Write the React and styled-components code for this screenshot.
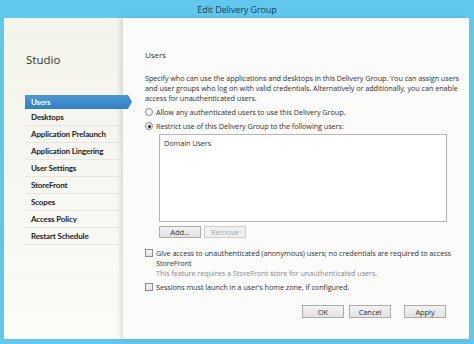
import React from "react";
import styled, { createGlobalStyle } from "styled-components";

const Global = createGlobalStyle`
  html, body { margin: 0; padding: 0; background: #5fc8ec; }
  * { box-sizing: border-box; }
`;

const Window = styled.div`
  width: 474px;
  height: 344px;
  background: #5fc8ec;
  display: flex;
  flex-direction: column;
  font-family: "Open Sans", "Noto Sans", sans-serif;
  color: #333;
  overflow: hidden;
`;

const TitleBar = styled.div`
  height: 18px;
  display: flex;
  align-items: center;
  justify-content: center;
  font-size: 9px;
  letter-spacing: -0.1px;
  color: #1b3b52;
  padding-top: 1px;
`;

const Body = styled.div`
  flex: 1;
  min-height: 0;
  margin: 0 5px 5px 4px;
  display: flex;
  background: linear-gradient(180deg, #f4f4ec 0%, #f8f8f3 60%, #fbfbf8 100%);
`;

const Sidebar = styled.div`
  width: 119px;
  flex: none;
  padding-top: 33px;
  position: relative;
  z-index: 2;
`;

const Brand = styled.div`
  font-size: 11.5px;
  color: #333;
  padding-left: 22px;
  line-height: 18px;
  margin-bottom: 26px;
`;

const NavList = styled.div`
  display: flex;
  flex-direction: column;
  margin-left: 21px;
  width: 98px;
`;

const NavItem = styled.div`
  position: relative;
  height: ${(p) => (p.$active ? "14px" : "17px")};
  line-height: ${(p) => (p.$active ? "14px" : "17px")};
  padding-left: 6px;
  font-family: "Lato", "Open Sans", sans-serif;
  font-size: 8px;
  font-weight: 700;
  letter-spacing: -0.15px;
  white-space: nowrap;
  color: ${(p) => (p.$active ? "#fff" : "#222")};
  background: ${(p) =>
    p.$active ? "linear-gradient(180deg, #4b9ad6 0%, #2f7fc4 100%)" : "transparent"};
  border-bottom: ${(p) => (p.$active ? "none" : "1px solid #e6e6e0")};
  margin-right: ${(p) => (p.$active ? "-5px" : "0")};
  &::after {
    content: "";
    display: ${(p) => (p.$active ? "block" : "none")};
    position: absolute;
    right: -4px;
    top: 0;
    border-top: 7px solid transparent;
    border-bottom: 7px solid transparent;
    border-left: 4px solid #3c8bcc;
  }
`;

const Panel = styled.div`
  flex: 1;
  min-width: 0;
  overflow: hidden;
  background: #fbfbf9;
  box-shadow: -3px 0 4px rgba(0, 0, 0, 0.11);
  padding: 32px 0 0 22px;
  display: flex;
  flex-direction: column;
  font-size: 7.3px;
  letter-spacing: -0.08px;
  line-height: 10px;
`;

const Heading = styled.div`
  font-size: 8px;
  line-height: 10px;
  color: #333;
  margin-bottom: 13px;
`;

const Para = styled.div`
  white-space: nowrap;
  margin-bottom: 2px;
`;

const OptionRow = styled.label`
  display: flex;
  align-items: center;
  gap: 3px;
  height: 14px;
  white-space: nowrap;
`;

const Radio = styled.span`
  width: 8px;
  height: 8px;
  border-radius: 50%;
  border: 1px solid #8d8d8d;
  background: radial-gradient(circle, #fff 0%, #e6e6e6 100%);
  display: flex;
  align-items: center;
  justify-content: center;
  flex: none;
  &::before {
    content: "";
    width: 3px;
    height: 3px;
    border-radius: 50%;
    background: ${(p) => (p.$checked ? "#222" : "transparent")};
  }
`;

const Check = styled.span`
  width: 8px;
  height: 8px;
  border: 1px solid #8d8d8d;
  background: linear-gradient(180deg, #f4f4f4, #e2e2e2);
  flex: none;
  margin-top: ${(p) => p.$top || "0"};
`;

const ListBox = styled.div`
  margin: 1px 0 0 14px;
  width: 288px;
  height: 88px;
  border: 1px solid #b5b5b5;
  background: #fff;
  padding: 3px 4px;
  line-height: 10px;
`;

const ButtonRow = styled.div`
  display: flex;
  gap: ${(p) => p.$gap || "3px"};
  margin: ${(p) => p.$margin || "0"};
`;

const Button = styled.div`
  width: ${(p) => p.$w || "42px"};
  height: ${(p) => p.$h || "12px"};
  margin-left: ${(p) => p.$ml || "0"};
  border: 1px solid ${(p) => (p.$disabled ? "#cfcfcf" : "#acacac")};
  background: ${(p) =>
    p.$disabled ? "#efefef" : "linear-gradient(180deg, #f2f2f2 0%, #e3e3e3 100%)"};
  color: ${(p) => (p.$disabled ? "#a8a8a8" : "#333")};
  display: flex;
  align-items: center;
  justify-content: center;
  font-size: 7.5px;
`;

const CheckRow = styled.div`
  display: flex;
  gap: 3px;
  align-items: flex-start;
  margin: ${(p) => p.$margin || "0"};
`;

const CheckText = styled.div`
  white-space: nowrap;
  line-height: 10px;
`;

const Note = styled.div`
  color: #8a8a8a;
`;

const navItems = [
  "Desktops",
  "Application Prelaunch",
  "Application Lingering",
  "User Settings",
  "StoreFront",
  "Scopes",
  "Access Policy",
  "Restart Schedule",
];

export default function App() {
  return (
    <Window>
      <Global />
      <TitleBar>Edit Delivery Group</TitleBar>
      <Body>
        <Sidebar>
          <Brand>Studio</Brand>
          <NavList>
            <NavItem $active>Users</NavItem>
            {navItems.map((n) => (
              <NavItem key={n}>{n}</NavItem>
            ))}
          </NavList>
        </Sidebar>
        <Panel>
          <Heading>Users</Heading>
          <Para>
            Specify who can use the applications and desktops in this Delivery Group. You can assign users
            <br />
            and user groups who log on with valid credentials. Alternatively or additionally, you can enable
            <br />
            access for unauthenticated users.
          </Para>
          <OptionRow>
            <Radio />
            Allow any authenticated users to use this Delivery Group.
          </OptionRow>
          <OptionRow>
            <Radio $checked />
            Restrict use of this Delivery Group to the following users:
          </OptionRow>
          <ListBox>Domain Users</ListBox>
          <ButtonRow $margin="4px 0 0 14px">
            <Button>Add...</Button>
            <Button $disabled>Remove</Button>
          </ButtonRow>
          <CheckRow $margin="10px 0 0 0">
            <Check $top="1px" />
            <CheckText>
              Give access to unauthenticated (anonymous) users; no credentials are required to access
              <br />
              StoreFront
              <Note>This feature requires a StoreFront store for unauthenticated users.</Note>
            </CheckText>
          </CheckRow>
          <CheckRow $margin="4px 0 0 0">
            <Check $top="1px" />
            <CheckText>Sessions must launch in a user's home zone, if configured.</CheckText>
          </CheckRow>
          <ButtonRow $margin="13px 0 0 157px" $gap="5px">
            <Button $h="13px">OK</Button>
            <Button $h="13px">Cancel</Button>
            <Button $h="13px" $ml="8px">Apply</Button>
          </ButtonRow>
        </Panel>
      </Body>
    </Window>
  );
}
